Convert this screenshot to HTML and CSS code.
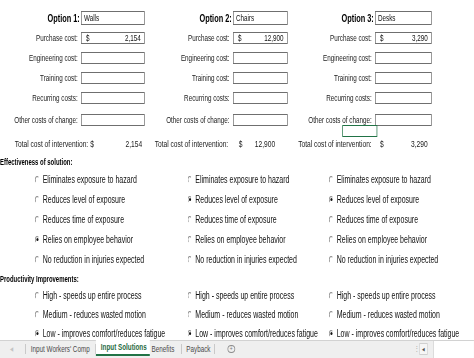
FILE: index.html
```html
<!DOCTYPE html>
<html>
<head>
<meta charset="utf-8">
<link rel="stylesheet" href="styles.css">
</head>
<body>
<div class="frame">
  <div class="sheet">
    <div class="costs">
      <div class="lbl opt">Option 1:</div><div class="box obox">Walls</div>
      <div class="lbl opt">Option 2:</div><div class="box obox">Chairs</div>
      <div class="lbl opt">Option 3:</div><div class="box obox">Desks</div>

      <div class="lbl">Purchase cost:</div><div class="box money"><span>$</span><span>2,154</span></div>
      <div class="lbl">Purchase cost:</div><div class="box money"><span>$</span><span>12,900</span></div>
      <div class="lbl">Purchase cost:</div><div class="box money"><span>$</span><span>3,290</span></div>

      <div class="lbl">Engineering cost:</div><div class="box"></div>
      <div class="lbl">Engineering cost:</div><div class="box"></div>
      <div class="lbl">Engineering cost:</div><div class="box"></div>

      <div class="lbl">Training cost:</div><div class="box"></div>
      <div class="lbl">Training cost:</div><div class="box"></div>
      <div class="lbl">Training cost:</div><div class="box"></div>

      <div class="lbl">Recurring costs:</div><div class="box"></div>
      <div class="lbl">Recurring costs:</div><div class="box"></div>
      <div class="lbl">Recurring costs:</div><div class="box"></div>

      <div class="lbl">Other costs of change:</div><div class="box"></div>
      <div class="lbl">Other costs of change:</div><div class="box"></div>
      <div class="lbl">Other costs of change:</div><div class="box"></div>
    </div>

    <div class="totals">
      <div class="tlbl">Total cost of intervention:</div><div class="tval t1"><span>$</span><span>2,154</span></div>
      <div class="tlbl">Total cost of intervention:</div><div class="tval t2"><span>$</span><span>12,900</span></div>
      <div class="tlbl">Total cost of intervention:</div><div class="tval t3"><span>$</span><span>3,290</span></div>
    </div>

    <div class="sec-title first">Effectiveness of solution:</div>
    <div class="radios eff">
      <ul class="rlist">
        <li><span class="rb"></span>Eliminates exposure to hazard</li>
        <li><span class="rb"></span>Reduces level of exposure</li>
        <li><span class="rb"></span>Reduces time of exposure</li>
        <li><span class="rb on"></span>Relies on employee behavior</li>
        <li><span class="rb"></span>No reduction in injuries expected</li>
      </ul>
      <ul class="rlist">
        <li><span class="rb"></span>Eliminates exposure to hazard</li>
        <li><span class="rb on"></span>Reduces level of exposure</li>
        <li><span class="rb"></span>Reduces time of exposure</li>
        <li><span class="rb"></span>Relies on employee behavior</li>
        <li><span class="rb"></span>No reduction in injuries expected</li>
      </ul>
      <ul class="rlist">
        <li><span class="rb"></span>Eliminates exposure to hazard</li>
        <li><span class="rb on"></span>Reduces level of exposure</li>
        <li><span class="rb"></span>Reduces time of exposure</li>
        <li><span class="rb"></span>Relies on employee behavior</li>
        <li><span class="rb"></span>No reduction in injuries expected</li>
      </ul>
    </div>

    <div class="sec-title second">Productivity Improvements:</div>
    <div class="radios prod">
      <ul class="rlist">
        <li><span class="rb"></span>High - speeds up entire process</li>
        <li><span class="rb"></span>Medium - reduces wasted motion</li>
        <li><span class="rb on"></span>Low - improves comfort/reduces fatigue</li>
      </ul>
      <ul class="rlist">
        <li><span class="rb"></span>High - speeds up entire process</li>
        <li><span class="rb"></span>Medium - reduces wasted motion</li>
        <li><span class="rb on"></span>Low - improves comfort/reduces fatigue</li>
      </ul>
      <ul class="rlist">
        <li><span class="rb"></span>High - speeds up entire process</li>
        <li><span class="rb"></span>Medium - reduces wasted motion</li>
        <li><span class="rb on"></span>Low - improves comfort/reduces fatigue</li>
      </ul>
    </div>

    <div class="active-cell"></div>
  </div>

  <div class="tabbar">
    <div class="nav"><span class="navarrow">&#9664;</span></div>
    <div class="sep"></div>
    <div class="tab tab-wc">Input Workers' Comp</div>
    <div class="sep"></div>
    <div class="tab active">Input Solutions</div>
    <div class="tab tab-ben">Benefits</div>
    <div class="sep"></div>
    <div class="tab tab-pay">Payback</div>
    <div class="sep"></div>
    <div class="addtab">+</div>
    <div class="hscroll">
      <span class="dots">&#8942;</span>
      <span class="arrowbtn">&#9664;</span>
      <span class="track"></span>
    </div>
  </div>
</div>
</body>
</html>
```

FILE: styles.css
```css
html, body {
  margin: 0;
  padding: 0;
  background: #ffffff;
  overflow: hidden;
}

body {
  width: 474px;
  height: 358px;
}

.frame {
  width: 677px;
  height: 358px;
  transform: scaleX(0.7);
  transform-origin: 0 0;
  font-family: "Liberation Sans", Arial, sans-serif;
  color: #111;
  display: flex;
  flex-direction: column;
}

.sheet {
  position: relative;
  height: 340px;
  flex: none;
  overflow: hidden;
}

/* cost inputs */
.costs {
  display: grid;
  grid-template-columns: 116px 91px 126px 78px 125px 81px;
  grid-template-rows: 21px 20px 20px 20px 20px 24px;
  padding-top: 7px;
  align-items: center;
}

.lbl {
  font-size: 9px;
  text-align: right;
  padding-right: 5px;
  white-space: nowrap;
  color: #1a1a1a;
}

.lbl.opt {
  font-size: 10.5px;
  font-weight: bold;
  padding-right: 2px;
  color: #000;
}

.box {
  height: 12px;
  box-sizing: border-box;
  border: 1px solid #6f6f6f;
  font-size: 9px;
  line-height: 10px;
  color: #111;
}

.obox {
  height: 14px;
  line-height: 12px;
  padding-left: 3px;
}

.money {
  display: flex;
  justify-content: space-between;
  padding: 0 5px 0 6px;
}

/* totals */
.totals {
  display: grid;
  grid-template-columns: 126px 81px 119px 85px 120px 86px;
  height: 22px;
  align-items: center;
  font-size: 9.5px;
  color: #1a1a1a;
}

.tlbl {
  text-align: right;
  white-space: nowrap;
}

.tval {
  display: flex;
  justify-content: space-between;
}

.t1 { padding: 0 4px 0 3px; }
.t2 { padding: 0 18px 0 15px; }
.t3 { padding: 0 6px 0 12px; }

/* section titles */
.sec-title {
  font-size: 8.5px;
  font-weight: bold;
  line-height: 14px;
  color: #000;
}

.sec-title.first { margin-top: 1px; }
.sec-title.second { margin-top: 3px; }

/* radio groups */
.radios {
  display: grid;
  grid-template-columns: 218px 202px 1fr;
  padding-left: 50px;
}

.rlist {
  list-style: none;
  margin: 0;
  padding: 0;
}

.rlist li {
  display: flex;
  align-items: center;
  gap: 5px;
  height: 20px;
  font-size: 10px;
  white-space: nowrap;
  color: #111;
}

.prod .rlist li {
  height: 19px;
}

.rb {
  position: relative;
  flex: none;
  width: 6px;
  height: 7px;
  box-sizing: border-box;
  border: 1px solid;
  border-color: #8c8c8c transparent transparent #8c8c8c;
  border-radius: 50%;
}

.rb.on::after {
  content: "";
  position: absolute;
  left: 0.5px;
  top: 1px;
  width: 3px;
  height: 3px;
  border-radius: 50%;
  background: #111;
}

/* excel active cell */
.active-cell {
  position: absolute;
  left: 489px;
  top: 125px;
  width: 50px;
  height: 12px;
  box-sizing: border-box;
  border: 1.5px solid #217346;
}

/* sheet tabs */
.tabbar {
  flex: none;
  height: 18px;
  box-sizing: border-box;
  background: #efefef;
  border-top: 1px solid #d2d2d2;
  padding-bottom: 2px;
  display: flex;
  align-items: stretch;
  font-size: 9px;
  color: #4a4a4a;
}

.nav {
  width: 36px;
  display: flex;
  align-items: center;
  padding-left: 14px;
  box-sizing: border-box;
}

.navarrow {
  font-size: 6px;
  color: #c4c4c4;
}

.sep {
  width: 1px;
  height: 10px;
  align-self: center;
  background: #b9b9b9;
}

.tab {
  display: flex;
  align-items: center;
  white-space: nowrap;
}

.tab-wc { padding: 0 8px 0 7px; }

.tab.active {
  background: #ffffff;
  color: #1f6a41;
  font-weight: bold;
  padding: 0 4px 0 7px;
  margin-top: -1px;
  box-sizing: border-box;
  border-bottom: 2px solid #217346;
}

.tab-ben { padding: 0 10px 0 3px; }
.tab-pay { padding: 0 5px 0 6px; }

.addtab {
  width: 11px;
  height: 8px;
  align-self: center;
  margin-left: 18px;
  box-sizing: border-box;
  border: 1px solid #8a8a8a;
  border-radius: 50%;
  font-size: 7px;
  line-height: 6px;
  text-align: center;
  color: #777;
}

.hscroll {
  margin-left: auto;
  display: flex;
  align-items: center;
}

.dots {
  font-size: 8px;
  color: #a0a0a0;
  width: 6px;
}

.arrowbtn {
  width: 12px;
  height: 12px;
  box-sizing: border-box;
  border: 1px solid #d0d0d0;
  background: #f6f6f6;
  font-size: 5px;
  line-height: 10px;
  text-align: center;
  color: #555;
  margin-left: 1px;
}

.track {
  width: 58px;
  height: 17px;
  margin-left: 8px;
  box-sizing: border-box;
  background: #ffffff;
  border-left: 1px solid #cfcfcf;
  align-self: flex-start;
}
```
